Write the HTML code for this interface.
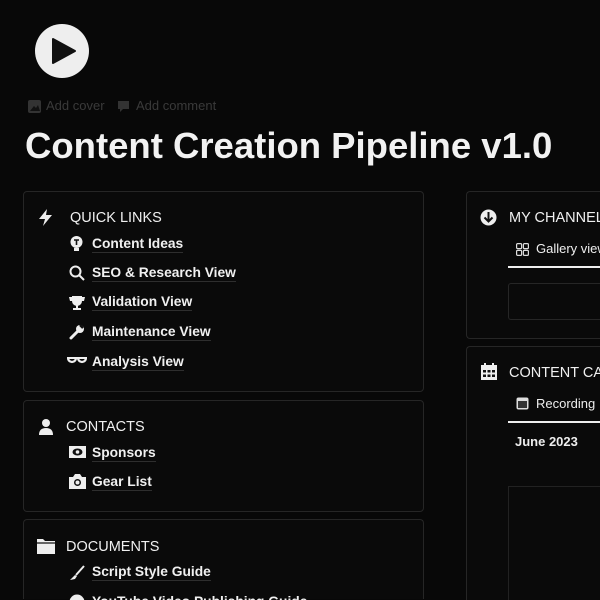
<!DOCTYPE html>
<html style="overflow:hidden"><head><style>
html,body{margin:0;width:600px;height:600px;overflow:hidden}
body{background:#080808;font-family:"Liberation Sans",sans-serif;color:#eee;position:relative}
.a{position:absolute}
.card{position:absolute;border:1px solid #262626;border-radius:4px;background:#0a0a0a}
.rc{border-right:none;border-radius:4px 0 0 4px}
.h{position:absolute;font-size:14.5px;color:#f0f0f0;white-space:nowrap}
.l{position:absolute;font-size:13.8px;color:#f0f0f0;white-space:nowrap;font-weight:bold;border-bottom:1px solid #2e2e2e;padding-bottom:1px}
svg{position:absolute}
</style></head><body>
<svg style="left:35px;top:24px" width="54" height="54"><circle cx="27" cy="27" r="27" fill="#eee"/><path d="M18 15 L40 27 L18 39 Z" fill="#111" stroke="#111" stroke-width="2" stroke-linejoin="round"/></svg>
<svg style="left:28px;top:100px" width="13" height="13"><rect x="0" y="0" width="13" height="13" rx="2" fill="#333"/><path d="M2 11 L6 6 L8 8 L10 5 L12 11Z" fill="#111"/></svg>
<div class="a" style="left:46px;top:98px;font-size:13px;color:#3a3a3a">Add cover</div>
<svg style="left:117px;top:100px" width="13" height="13"><path d="M1 1h11v8H6l-3 3V9H1z" fill="#333"/></svg>
<div class="a" style="left:136px;top:98px;font-size:13px;color:#3a3a3a">Add comment</div>
<div class="a" style="left:25px;top:125px;font-size:36.5px;font-weight:bold;color:#f2f2f2;white-space:nowrap">Content Creation Pipeline v1.0</div>

<div class="card" style="left:23px;top:191px;width:399px;height:199px"></div>
<svg style="left:38px;top:209px" width="16" height="17"><path d="M9 0 L1 10 H7 L5 17 L14 6 H8 Z" fill="#eee"/></svg>
<div class="h" style="left:70px;top:210px">QUICK LINKS</div>
<svg style="left:70px;top:236px" width="13" height="16"><circle cx="6.5" cy="6" r="6" fill="#eee"/><rect x="4" y="12" width="5" height="3" fill="#eee"/><path d="M4 4h5M6.5 4v5" stroke="#111" stroke-width="1.6"/></svg>
<div class="l" style="left:92px;top:236px">Content Ideas</div>
<svg style="left:69px;top:265px" width="16" height="16"><circle cx="6.5" cy="6.5" r="5" fill="none" stroke="#eee" stroke-width="2"/><path d="M10 10l5 5" stroke="#eee" stroke-width="2"/></svg>
<div class="l" style="left:92px;top:265px">SEO &amp; Research View</div>
<svg style="left:68px;top:295px" width="18" height="16"><path d="M4 1h10v5a5 5 0 0 1-10 0z M1 2h3v4H2z M17 2h-3v4h2z" fill="#eee"/><rect x="8" y="10" width="2" height="3" fill="#eee"/><rect x="5" y="13" width="8" height="2" fill="#eee"/></svg>
<div class="l" style="left:92px;top:294px">Validation View</div>
<svg style="left:69px;top:324px" width="16" height="16"><path d="M2 14 L9 7" stroke="#eee" stroke-width="3" stroke-linecap="round"/><circle cx="11" cy="5" r="4" fill="#eee"/><path d="M11 1 l3 3" stroke="#111" stroke-width="2.5"/></svg>
<div class="l" style="left:92px;top:324px">Maintenance View</div>
<svg style="left:67px;top:357px" width="20" height="9"><path d="M0 1h20" stroke="#eee" stroke-width="2"/><path d="M1 1 a4 4 0 0 0 8 0 M11 1 a4 4 0 0 0 8 0" fill="none" stroke="#eee" stroke-width="2.2"/></svg>
<div class="l" style="left:92px;top:354px">Analysis View</div>

<div class="card" style="left:23px;top:400px;width:399px;height:110px"></div>
<svg style="left:38px;top:418px" width="16" height="17"><circle cx="8" cy="5" r="4" fill="#eee"/><path d="M1 17 q0-7 7-7 q7 0 7 7z" fill="#eee"/></svg>
<div class="h" style="left:66px;top:419px">CONTACTS</div>
<svg style="left:69px;top:446px" width="17" height="12"><rect x="0" y="0" width="17" height="12" fill="#eee"/><ellipse cx="8.5" cy="6" rx="5" ry="3.5" fill="#111"/><circle cx="8.5" cy="6" r="1.8" fill="#eee"/></svg>
<div class="l" style="left:92px;top:445px">Sponsors</div>
<svg style="left:69px;top:474px" width="17" height="15"><path d="M0 3h4l2-3h5l2 3h4v12H0z" fill="#eee"/><circle cx="8.5" cy="8.5" r="3.5" fill="#111"/><circle cx="8.5" cy="8.5" r="2" fill="#eee"/></svg>
<div class="l" style="left:92px;top:474px">Gear List</div>

<div class="card" style="left:23px;top:519px;width:399px;height:79px;border-bottom:none;border-radius:4px 4px 0 0"></div>
<svg style="left:37px;top:538px" width="18" height="16"><path d="M0 1h6l2 2h10v13H0z" fill="#eee"/><path d="M0 5h18" stroke="#111" stroke-width="1.2"/></svg>
<div class="h" style="left:66px;top:539px">DOCUMENTS</div>
<svg style="left:69px;top:565px" width="16" height="16"><path d="M15 1 L7 10" stroke="#eee" stroke-width="2"/><path d="M6 10 l-4 4 l-1 1 l5-1 l2-3z" fill="#eee"/></svg>
<div class="l" style="left:92px;top:564px">Script Style Guide</div>
<div class="a" style="left:0;top:594px;width:600px;height:6px;overflow:hidden">
<svg style="left:69px;top:0" width="16" height="16"><circle cx="8" cy="8" r="7.5" fill="#eee"/></svg>
<div class="l" style="left:92px;top:0">YouTube Video Publishing Guide</div>
</div>

<div class="card rc" style="left:466px;top:191px;width:133px;height:146px"></div>
<svg style="left:480px;top:209px" width="17" height="17"><circle cx="8.5" cy="8.5" r="8" fill="#eee"/><path d="M8.5 3v9M4.5 8.5l4 4 4-4" fill="none" stroke="#111" stroke-width="2"/></svg>
<div class="a" style="left:509px;top:210px;width:91px;overflow:hidden;font-size:14.5px;color:#f0f0f0;white-space:nowrap">MY CHANNEL</div>
<svg style="left:516px;top:243px" width="13" height="13"><g fill="none" stroke="#ddd" stroke-width="1.2"><rect x="0.6" y="0.6" width="5" height="5" rx="1"/><rect x="7.4" y="0.6" width="5" height="5" rx="1"/><rect x="0.6" y="7.4" width="5" height="5" rx="1"/><rect x="7.4" y="7.4" width="5" height="5" rx="1"/></g></svg>
<div class="a" style="left:536px;top:241px;width:64px;overflow:hidden;font-size:13px;color:#eee;white-space:nowrap">Gallery view</div>
<div class="a" style="left:508px;top:266px;width:92px;height:2px;background:#eee"></div>
<div class="card rc" style="left:508px;top:283px;width:91px;height:35px;border-radius:3px 0 0 3px"></div>

<div class="card rc" style="left:466px;top:346px;width:133px;height:254px;border-bottom:none;border-radius:4px 0 0 0"></div>
<svg style="left:481px;top:363px" width="16" height="17"><rect x="0" y="2" width="16" height="15" fill="#eee"/><path d="M4 0v3M12 0v3" stroke="#eee" stroke-width="2"/><g fill="#111"><rect x="2" y="7" width="3" height="2.5"/><rect x="6.5" y="7" width="3" height="2.5"/><rect x="11" y="7" width="3" height="2.5"/><rect x="2" y="11.5" width="3" height="2.5"/><rect x="6.5" y="11.5" width="3" height="2.5"/><rect x="11" y="11.5" width="3" height="2.5"/></g></svg>
<div class="a" style="left:509px;top:365px;width:91px;overflow:hidden;font-size:14.5px;color:#f0f0f0;white-space:nowrap">CONTENT CALENDAR</div>
<svg style="left:516px;top:397px" width="13" height="13"><rect x="0.5" y="0.5" width="12" height="12" rx="2" fill="#ddd"/><rect x="2" y="4" width="9" height="7" fill="#333"/></svg>
<div class="a" style="left:536px;top:396px;font-size:13px;color:#eee;white-space:nowrap">Recording</div>
<div class="a" style="left:508px;top:421px;width:92px;height:2px;background:#eee"></div>
<div class="a" style="left:515px;top:434px;font-size:13px;font-weight:bold;color:#eee">June 2023</div>
<div class="a" style="left:508px;top:486px;width:92px;height:1px;background:#222"></div>
<div class="a" style="left:508px;top:486px;width:1px;height:114px;background:#222"></div>
</body></html>
